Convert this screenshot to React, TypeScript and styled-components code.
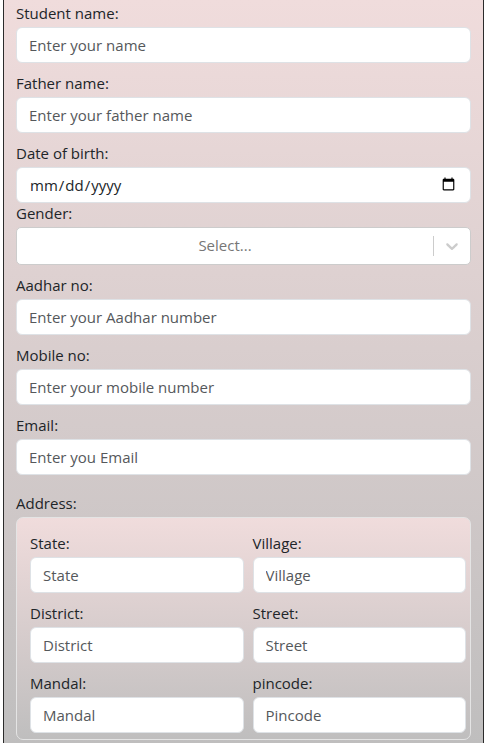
import React from "react";
import styled, { createGlobalStyle } from "styled-components";

const GlobalStyle = createGlobalStyle`
  html, body {
    margin: 0;
    padding: 0;
    background: #ffffff;
  }
  body {
    font-family: "Open Sans", "Noto Sans", sans-serif;
    color: #212529;
  }
  * { box-sizing: border-box; }
`;

const softGradient = "linear-gradient(180deg, #f0dcdc 0%, #bfbebe 100%)";

const Page = styled.div`
  margin: 0 3px;
  min-height: 743px;
  border-left: 1px solid #2b2b2b;
  border-right: 1px solid #2b2b2b;
  background: ${softGradient};
  padding: 3px 12px 4px;
`;

const Form = styled.form`
  display: flex;
  flex-direction: column;
`;

const FieldGroup = styled.div<{ $gap?: number }>`
  display: flex;
  flex-direction: column;
  margin-bottom: ${(p) => (p.$gap ?? 10)}px;
`;

const Label = styled.label`
  display: block;
  font-size: 15px;
  line-height: 21px;
  height: 24px;
  color: #212529;
  white-space: nowrap;
`;

const TextInput = styled.input`
  display: block;
  width: 100%;
  height: 36px;
  padding: 0 12px 1px;
  font-family: "Open Sans", "Noto Sans", sans-serif;
  font-size: 15px;
  color: #212529;
  background: #ffffff;
  border: 1px solid #dee2e6;
  border-radius: 6px;
  outline: none;
  &::placeholder {
    color: #55585b;
    opacity: 1;
  }
`;

const DateInput = styled(TextInput)`
  color: #212529;
  &::-webkit-calendar-picker-indicator {
    margin-right: 0;
  }
`;

const SelectBox = styled.div`
  display: flex;
  align-items: center;
  height: 38px;
  background: #ffffff;
  border: 1px solid #cccccc;
  border-radius: 5px;
`;

const SelectValue = styled.div`
  flex: 1;
  text-align: center;
  font-size: 15px;
  line-height: 21px;
  padding: 0 8px 1px;
  color: #767676;
`;

const Separator = styled.span`
  align-self: stretch;
  width: 1px;
  margin: 8px 0;
  background: #cccccc;
`;

const Indicator = styled.div`
  display: flex;
  padding: 8px;
  color: #cccccc;
`;

const AddressTitle = styled(Label)`
  margin-top: 8px;
`;

const AddressCard = styled.div`
  background: ${softGradient};
  border: 1px solid #e4e4e4;
  border-radius: 7px;
  padding: 15px 4px 6px 13px;
`;

const AddressGrid = styled.div`
  display: grid;
  grid-template-columns: 1fr 1fr;
  column-gap: 9px;
`;

const Chevron = () => (
  <svg width="20" height="20" viewBox="0 0 20 20" fill="currentColor" aria-hidden="true">
    <path d="M4.516 7.548c0.436-0.446 1.043-0.481 1.576 0l3.908 3.747 3.908-3.747c0.533-0.481 1.141-0.446 1.574 0 0.436 0.445 0.408 1.197 0 1.615-0.406 0.418-4.695 4.502-4.695 4.502-0.217 0.223-0.502 0.335-0.787 0.335s-0.57-0.112-0.789-0.335c0 0-4.287-4.084-4.695-4.502s-0.436-1.170 0-1.615z" />
  </svg>
);

const mainFields = [
  { label: "Aadhar no:", placeholder: "Enter your Aadhar number" },
  { label: "Mobile no:", placeholder: "Enter your mobile number" },
  { label: "Email:", placeholder: "Enter you Email" },
];

const addressFields = [
  { label: "State:", placeholder: "State" },
  { label: "Village:", placeholder: "Village" },
  { label: "District:", placeholder: "District" },
  { label: "Street:", placeholder: "Street" },
  { label: "Mandal:", placeholder: "Mandal" },
  { label: "pincode:", placeholder: "Pincode" },
];

export default function App() {
  return (
    <>
      <GlobalStyle />
      <Page>
        <Form onSubmit={(e) => e.preventDefault()}>
          <FieldGroup>
            <Label>Student name:</Label>
            <TextInput type="text" placeholder="Enter your name" />
          </FieldGroup>
          <FieldGroup>
            <Label>Father name:</Label>
            <TextInput type="text" placeholder="Enter your father name" />
          </FieldGroup>
          <FieldGroup $gap={0}>
            <Label>Date of birth:</Label>
            <DateInput type="date" />
          </FieldGroup>
          <FieldGroup>
            <Label>Gender:</Label>
            <SelectBox>
              <SelectValue>Select...</SelectValue>
              <Separator />
              <Indicator>
                <Chevron />
              </Indicator>
            </SelectBox>
          </FieldGroup>
          {mainFields.map((f) => (
            <FieldGroup key={f.label}>
              <Label>{f.label}</Label>
              <TextInput type="text" placeholder={f.placeholder} />
            </FieldGroup>
          ))}
          <AddressTitle>Address:</AddressTitle>
          <AddressCard>
            <AddressGrid>
              {addressFields.map((f, i) => (
                <FieldGroup key={f.label} $gap={i >= 4 ? 0 : 10}>
                  <Label>{f.label}</Label>
                  <TextInput type="text" placeholder={f.placeholder} />
                </FieldGroup>
              ))}
            </AddressGrid>
          </AddressCard>
        </Form>
      </Page>
    </>
  );
}
